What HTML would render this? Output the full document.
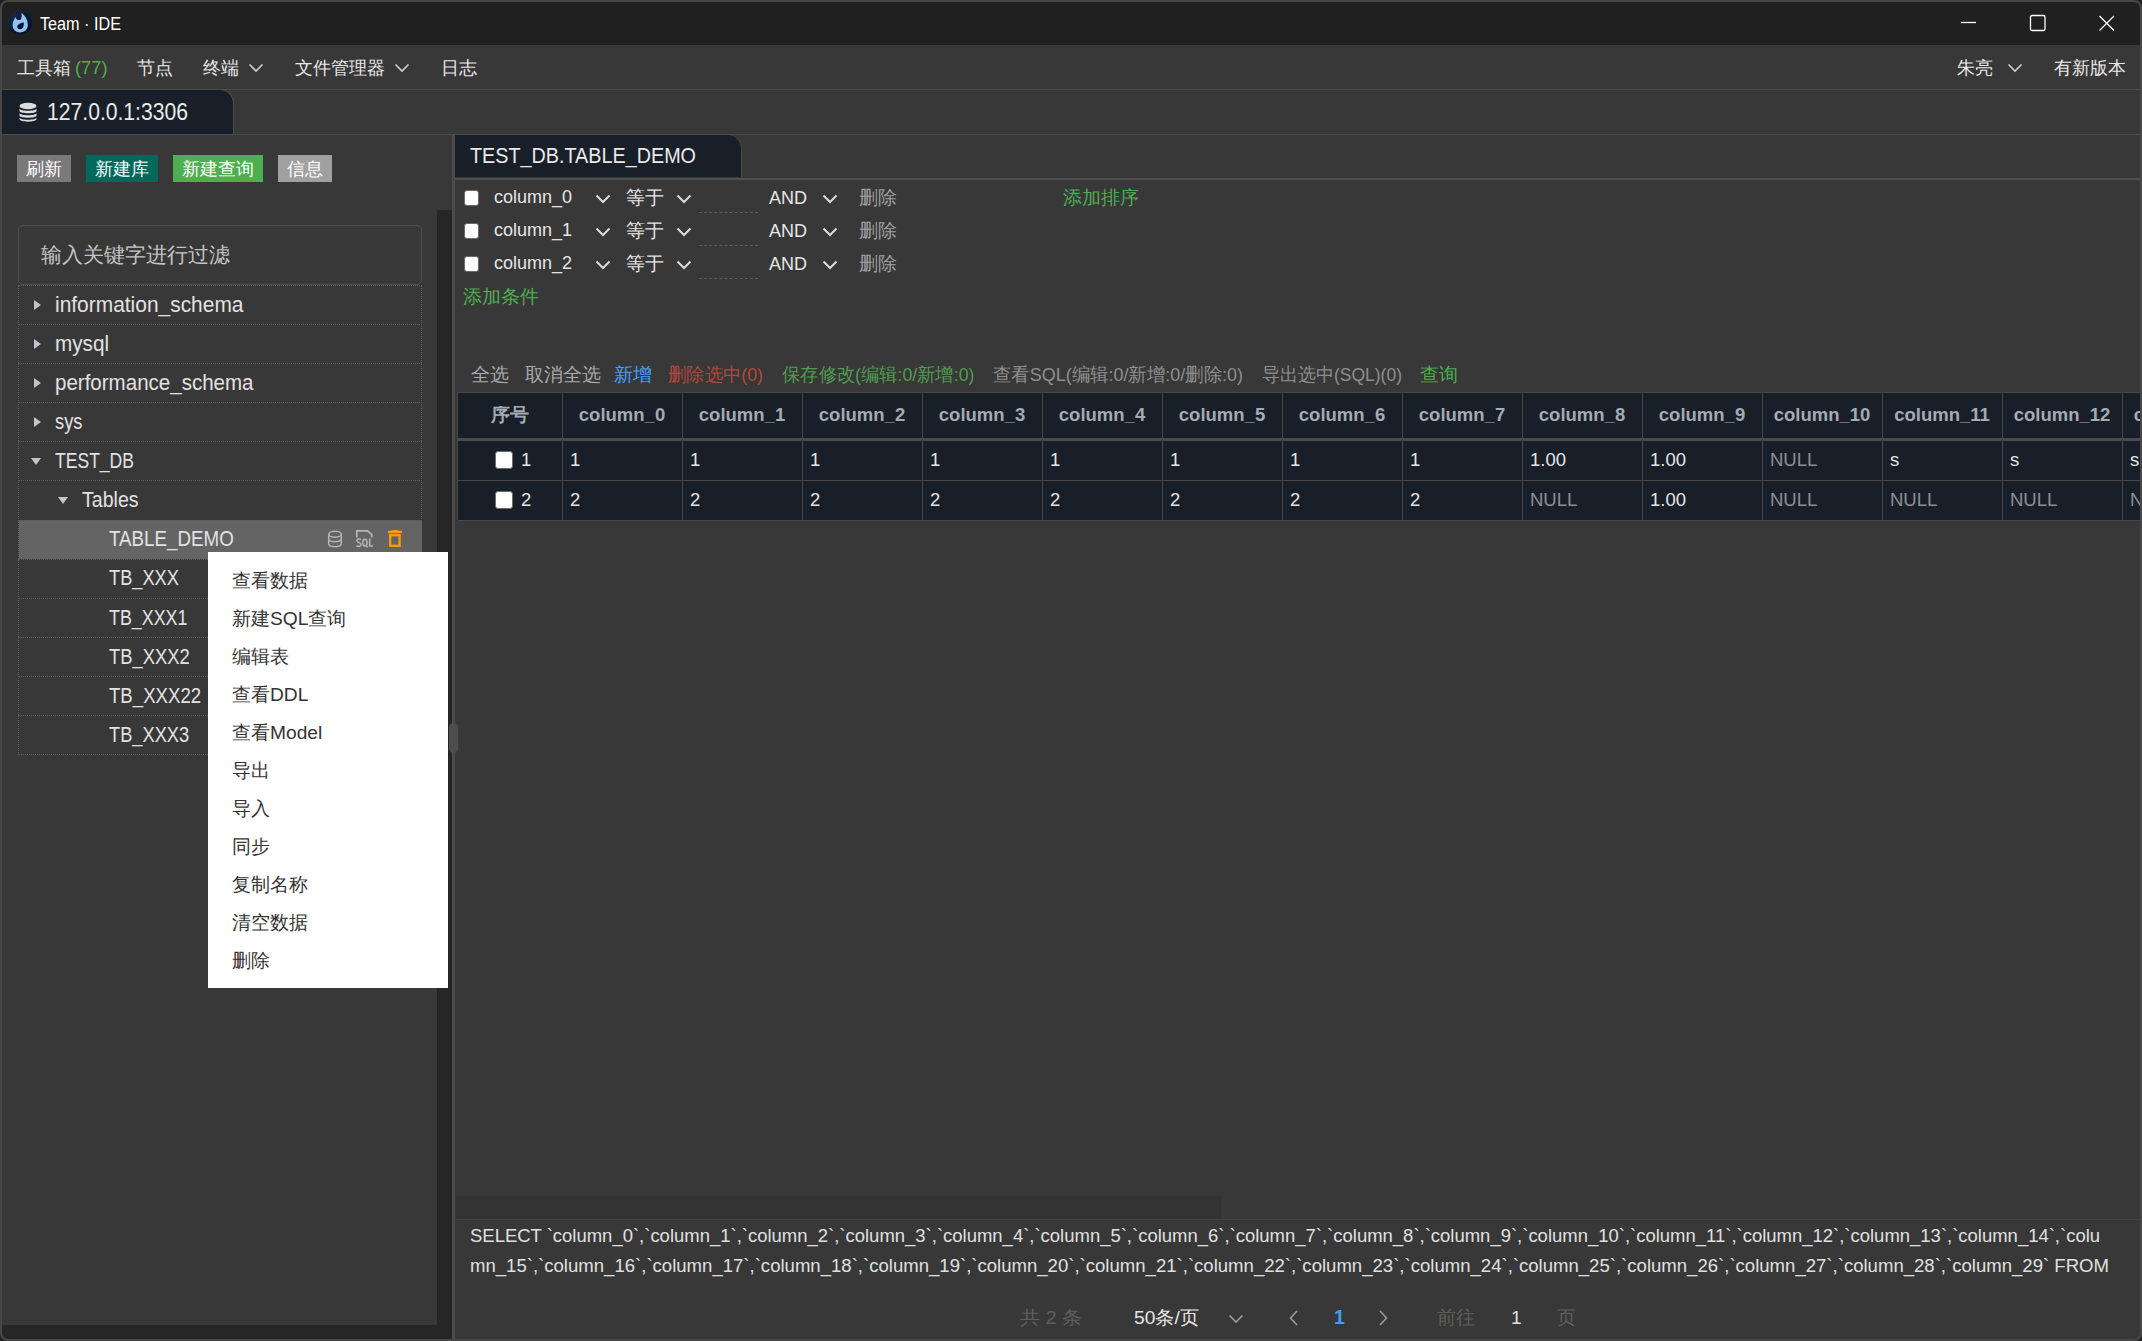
<!DOCTYPE html>
<html><head><meta charset="utf-8">
<style>
*{box-sizing:border-box;margin:0;padding:0}
html,body{width:2142px;height:1341px;overflow:hidden;background:#222222;font-family:"Liberation Sans",sans-serif;color:#e6e6e6}
.a{position:absolute}
.t{position:absolute;white-space:nowrap;line-height:1}
</style></head><body>
<div class="a" style="left:0;top:0;width:2142px;height:1341px;background:#383838;border-radius:8px"></div>
<div class="a" style="left:0;top:0;width:2142px;height:45px;background:#202020"></div>
<svg class="a" style="left:0;top:0" width="45" height="45" viewBox="0 0 45 45">
<defs><linearGradient id="g1" x1="0" y1="0" x2="1" y2="1"><stop offset="0" stop-color="#1a2b48"/><stop offset="1" stop-color="#000c26"/></linearGradient></defs>
<circle cx="20" cy="22.9" r="11.9" fill="url(#g1)"/>
<path d="M20 32.4 C15.6 32.4 12.6 29.2 12.6 25.3 C12.6 21.6 14.3 19.2 15.4 16.9 C16 19 17.4 20.2 19.2 20.1 C21.2 20 22.2 17.6 21.4 12.7 C25.2 15.6 27.8 20 27.8 25 C27.8 29.4 24.5 32.4 20 32.4 Z" fill="#8fc6ef"/>
<path d="M23.7 22.2 C22.3 22.6 17.6 23.6 17.2 26.6 C17 28.3 18.5 29.3 20.3 29.2 C22.6 29 24.2 26.8 23.7 22.2 Z" fill="#001230"/>
</svg>
<div class="t" style="left:40px;top:15px;font-size:18.2px;color:#ffffff;transform:scaleX(0.8904);transform-origin:0 0;">Team · IDE</div>
<svg class="a" style="left:1955px;top:10px" width="180" height="26">
 <line x1="6" y1="12.5" x2="21" y2="12.5" stroke="#fff" stroke-width="1.3"/>
 <rect x="75.5" y="5.5" width="14.5" height="15" rx="1.5" fill="none" stroke="#fff" stroke-width="1.3"/>
 <path d="M144.5 6 L159 20.5 M159 6 L144.5 20.5" stroke="#fff" stroke-width="1.3"/>
</svg>
<div class="a" style="left:0;top:45px;width:2142px;height:44px;background:#383838"></div>
<div class="a" style="left:0;top:89px;width:2142px;height:1px;background:#4b4b4b"></div>
<div class="t" style="left:17px;top:59px;font-size:18px;color:#e8e8e8;">工具箱</div>
<div class="t" style="left:74.5px;top:58.5px;font-size:18.5px;color:#4caf50;transform:scaleX(0.9877);transform-origin:0 0;">(77)</div>
<div class="t" style="left:137px;top:59px;font-size:18px;color:#e8e8e8;">节点</div>
<div class="t" style="left:203px;top:59px;font-size:18px;color:#e8e8e8;">终端</div>
<svg class="a" style="left:248px;top:63px" width="16" height="10"><path d="M1.5 1.5 L8 8 L14.5 1.5" fill="none" stroke="#cfcfcf" stroke-width="1.6"/></svg>
<div class="t" style="left:295px;top:59px;font-size:18px;color:#e8e8e8;">文件管理器</div>
<svg class="a" style="left:394px;top:63px" width="16" height="10"><path d="M1.5 1.5 L8 8 L14.5 1.5" fill="none" stroke="#cfcfcf" stroke-width="1.6"/></svg>
<div class="t" style="left:441px;top:59px;font-size:18px;color:#e8e8e8;">日志</div>
<div class="t" style="left:1957px;top:59px;font-size:18px;color:#e8e8e8;">朱亮</div>
<svg class="a" style="left:2007px;top:63px" width="16" height="10"><path d="M1.5 1.5 L8 8 L14.5 1.5" fill="none" stroke="#cfcfcf" stroke-width="1.6"/></svg>
<div class="t" style="left:2054px;top:59px;font-size:18px;color:#e8e8e8;">有新版本</div>
<div class="a" style="left:2px;top:90px;width:232px;height:44px;background:#191f28;border-right:1px solid #4b4b4b;border-top-right-radius:14px;box-shadow:0 -1px 0 #4b4b4b"></div>
<svg class="a" style="left:18px;top:102px" width="20" height="21" viewBox="0 0 20 21">
 <ellipse cx="10" cy="4" rx="8.5" ry="3.3" fill="#dcdcdc"/>
 <path d="M1.5 6.5 C1.5 9.5 18.5 9.5 18.5 6.5 L18.5 9 C18.5 12 1.5 12 1.5 9 Z" fill="#dcdcdc"/>
 <path d="M1.5 11 C1.5 14 18.5 14 18.5 11 L18.5 13.5 C18.5 16.5 1.5 16.5 1.5 13.5 Z" fill="#dcdcdc"/>
 <path d="M1.5 15.5 C1.5 18.5 18.5 18.5 18.5 15.5 L18.5 17 C18.5 20.5 1.5 20.5 1.5 17 Z" fill="#dcdcdc"/>
</svg>
<div class="t" style="left:47px;top:100.5px;font-size:23px;color:#eaeaea;transform:scaleX(0.9187);transform-origin:0 0;">127.0.0.1:3306</div>
<div class="a" style="left:0;top:134px;width:2142px;height:1px;background:#4b4b4b"></div>
<div class="a" style="left:17px;top:155px;width:54px;height:27px;background:#7a7a7a"></div>
<div class="a" style="left:86px;top:155px;width:72px;height:27px;background:#00695c"></div>
<div class="a" style="left:173px;top:155px;width:90px;height:27px;background:#4caf50"></div>
<div class="a" style="left:278px;top:155px;width:54px;height:27px;background:#a0a0a0"></div>
<div class="t" style="left:26px;top:160px;font-size:18px;color:#fff;">刷新</div>
<div class="t" style="left:95px;top:160px;font-size:18px;color:#fff;">新建库</div>
<div class="t" style="left:182px;top:160px;font-size:18px;color:#fff;">新建查询</div>
<div class="t" style="left:287px;top:160px;font-size:18px;color:#fff;">信息</div>
<div class="a" style="left:18px;top:225px;width:404px;height:60px;border:1px solid #4e4e4e;border-radius:5px"></div>
<div class="t" style="left:41px;top:244px;font-size:21px;color:#c4c4c4;">输入关键字进行过滤</div>
<div class="a" style="left:18px;top:285px;width:404px;height:470px;border-left:1px dotted #5c5c5c;border-right:1px dotted #5c5c5c"></div>
<div class="a" style="left:18px;top:285px;width:404px;height:0;border-top:1px dotted #5c5c5c"></div>
<div class="a" style="left:34px;top:300px;width:0;height:0;border-top:5.5px solid transparent;border-bottom:5.5px solid transparent;border-left:7.5px solid #c0c4cc"></div>
<div class="t" style="left:55px;top:294.7px;font-size:21.5px;color:#e2e2e2;transform:scaleX(0.9736);transform-origin:0 0;">information_schema</div>
<div class="a" style="left:18px;top:324px;width:404px;height:0;border-top:1px dotted #5c5c5c"></div>
<div class="a" style="left:34px;top:339px;width:0;height:0;border-top:5.5px solid transparent;border-bottom:5.5px solid transparent;border-left:7.5px solid #c0c4cc"></div>
<div class="t" style="left:55px;top:333.8px;font-size:21.5px;color:#e2e2e2;transform:scaleX(0.9616);transform-origin:0 0;">mysql</div>
<div class="a" style="left:18px;top:363px;width:404px;height:0;border-top:1px dotted #5c5c5c"></div>
<div class="a" style="left:34px;top:378px;width:0;height:0;border-top:5.5px solid transparent;border-bottom:5.5px solid transparent;border-left:7.5px solid #c0c4cc"></div>
<div class="t" style="left:55px;top:372.9px;font-size:21.5px;color:#e2e2e2;transform:scaleX(0.9546);transform-origin:0 0;">performance_schema</div>
<div class="a" style="left:18px;top:402px;width:404px;height:0;border-top:1px dotted #5c5c5c"></div>
<div class="a" style="left:34px;top:417px;width:0;height:0;border-top:5.5px solid transparent;border-bottom:5.5px solid transparent;border-left:7.5px solid #c0c4cc"></div>
<div class="t" style="left:55px;top:412.0px;font-size:21.5px;color:#e2e2e2;transform:scaleX(0.8496);transform-origin:0 0;">sys</div>
<div class="a" style="left:18px;top:441px;width:404px;height:0;border-top:1px dotted #5c5c5c"></div>
<div class="a" style="left:31px;top:458px;width:0;height:0;border-left:5.5px solid transparent;border-right:5.5px solid transparent;border-top:7.5px solid #c0c4cc"></div>
<div class="t" style="left:55px;top:451.1px;font-size:21.5px;color:#e2e2e2;transform:scaleX(0.8163);transform-origin:0 0;">TEST_DB</div>
<div class="a" style="left:18px;top:480px;width:404px;height:0;border-top:1px dotted #5c5c5c"></div>
<div class="a" style="left:58px;top:497px;width:0;height:0;border-left:5.5px solid transparent;border-right:5.5px solid transparent;border-top:7.5px solid #c0c4cc"></div>
<div class="t" style="left:82px;top:490.2px;font-size:21.5px;color:#e2e2e2;transform:scaleX(0.9106);transform-origin:0 0;">Tables</div>
<div class="a" style="left:19px;top:520px;width:403px;height:39px;background:#646464"></div>
<div class="a" style="left:18px;top:520px;width:404px;height:0;border-top:1px dotted #5c5c5c"></div>
<div class="t" style="left:109px;top:529.3px;font-size:21.5px;color:#e2e2e2;transform:scaleX(0.8728);transform-origin:0 0;">TABLE_DEMO</div>
<div class="a" style="left:18px;top:559px;width:404px;height:0;border-top:1px dotted #5c5c5c"></div>
<div class="t" style="left:109px;top:568.4px;font-size:21.5px;color:#e2e2e2;transform:scaleX(0.8478);transform-origin:0 0;">TB_XXX</div>
<div class="a" style="left:18px;top:598px;width:404px;height:0;border-top:1px dotted #5c5c5c"></div>
<div class="t" style="left:109px;top:607.5px;font-size:21.5px;color:#e2e2e2;transform:scaleX(0.8303);transform-origin:0 0;">TB_XXX1</div>
<div class="a" style="left:18px;top:637px;width:404px;height:0;border-top:1px dotted #5c5c5c"></div>
<div class="t" style="left:109px;top:646.6px;font-size:21.5px;color:#e2e2e2;transform:scaleX(0.8557);transform-origin:0 0;">TB_XXX2</div>
<div class="a" style="left:18px;top:676px;width:404px;height:0;border-top:1px dotted #5c5c5c"></div>
<div class="t" style="left:109px;top:685.7px;font-size:21.5px;color:#e2e2e2;transform:scaleX(0.8658);transform-origin:0 0;">TB_XXX22</div>
<div class="a" style="left:18px;top:715px;width:404px;height:0;border-top:1px dotted #5c5c5c"></div>
<div class="t" style="left:109px;top:724.8px;font-size:21.5px;color:#e2e2e2;transform:scaleX(0.8494);transform-origin:0 0;">TB_XXX3</div>
<div class="a" style="left:18px;top:754px;width:404px;height:0;border-top:1px dotted #5c5c5c"></div>
<svg class="a" style="left:326px;top:529px" width="18" height="20" viewBox="0 0 18 20">
<ellipse cx="9" cy="5.3" rx="6.3" ry="3" fill="none" stroke="#b4b4b4" stroke-width="1.5"/>
<path d="M2.7 5.3 V14.8 C2.7 18.8 15.3 18.8 15.3 14.8 V5.3 M2.7 9.8 C2.7 13.8 15.3 13.8 15.3 9.8" fill="none" stroke="#b4b4b4" stroke-width="1.5"/></svg>
<svg class="a" style="left:355px;top:529px" width="19" height="20" viewBox="0 0 19 20">
<path d="M1.8 8.5 V1.8 H12.6 L16.8 5.6 V8.5" fill="none" stroke="#b4b4b4" stroke-width="1.7"/>
<path d="M5.9 10.7 C5.2 9.7 1.9 9.5 1.9 11.8 C1.9 13.8 5.9 13.2 5.9 15.5 C5.9 17.9 2.4 17.7 1.5 16.5" fill="none" stroke="#b4b4b4" stroke-width="1.6"/>
<ellipse cx="9.9" cy="13.6" rx="2.1" ry="3.4" fill="none" stroke="#b4b4b4" stroke-width="1.6"/><path d="M10.6 16.2 L12.6 18.2 M14.7 9.6 V17 H18" fill="none" stroke="#b4b4b4" stroke-width="1.6"/></svg>
<svg class="a" style="left:386px;top:529px" width="18" height="20" viewBox="0 0 18 20">
<rect x="2" y="1.8" width="14" height="2.5" rx="0.6" fill="#ff9a00"/><path d="M5.8 2 C6.3 0.6 11.7 0.6 12.2 2 Z" fill="#ff9a00"/>
<rect x="4.2" y="6.2" width="9.4" height="10.6" fill="none" stroke="#ff9a00" stroke-width="2.3"/></svg>
<div class="a" style="left:437px;top:210px;width:15px;height:1131px;background:#262626"></div>
<div class="a" style="left:2px;top:1325px;width:450px;height:16px;background:#262626"></div>
<div class="a" style="left:452px;top:135px;width:3px;height:1206px;background:#4b4b4b"></div>
<div class="a" style="left:449px;top:723px;width:9px;height:30px;background:#4d4d4d;border-radius:4.5px"></div>
<div class="a" style="left:455px;top:135px;width:287px;height:42px;background:#191f28;border-right:1px solid #4b4b4b;border-top-right-radius:14px"></div>
<div class="t" style="left:470px;top:145px;font-size:22.6px;color:#eaeaea;transform:scaleX(0.8752);transform-origin:0 0;">TEST_DB.TABLE_DEMO</div>
<div class="a" style="left:455px;top:178px;width:1685px;height:2px;background:#4e4e4e"></div>
<div class="a" style="left:464px;top:190px;width:15px;height:16px;background:#fff;border:1.2px solid #6a6a6a;border-radius:3px"></div>
<div class="t" style="left:494px;top:188.0px;font-size:18px;color:#e6e6e6;">column_0</div>
<svg class="a" style="left:595px;top:193.5px" width="16" height="10"><path d="M1.5 1.5 L8 8 L14.5 1.5" fill="none" stroke="#dcdcdc" stroke-width="2"/></svg>
<div class="t" style="left:626px;top:187.5px;font-size:19px;color:#e6e6e6;">等于</div>
<svg class="a" style="left:676px;top:193.5px" width="16" height="10"><path d="M1.5 1.5 L8 8 L14.5 1.5" fill="none" stroke="#dcdcdc" stroke-width="2"/></svg>
<div class="a" style="left:699px;top:212px;width:59px;height:0;border-top:1px dashed #5a5a5a"></div>
<div class="t" style="left:769px;top:188.7px;font-size:18px;color:#e6e6e6;">AND</div>
<svg class="a" style="left:822px;top:193.5px" width="16" height="10"><path d="M1.5 1.5 L8 8 L14.5 1.5" fill="none" stroke="#dcdcdc" stroke-width="2"/></svg>
<div class="t" style="left:859px;top:187.5px;font-size:19px;color:#a0a0a0;">删除</div>
<div class="a" style="left:464px;top:223px;width:15px;height:16px;background:#fff;border:1.2px solid #6a6a6a;border-radius:3px"></div>
<div class="t" style="left:494px;top:221.0px;font-size:18px;color:#e6e6e6;">column_1</div>
<svg class="a" style="left:595px;top:226.5px" width="16" height="10"><path d="M1.5 1.5 L8 8 L14.5 1.5" fill="none" stroke="#dcdcdc" stroke-width="2"/></svg>
<div class="t" style="left:626px;top:220.5px;font-size:19px;color:#e6e6e6;">等于</div>
<svg class="a" style="left:676px;top:226.5px" width="16" height="10"><path d="M1.5 1.5 L8 8 L14.5 1.5" fill="none" stroke="#dcdcdc" stroke-width="2"/></svg>
<div class="a" style="left:699px;top:245px;width:59px;height:0;border-top:1px dashed #5a5a5a"></div>
<div class="t" style="left:769px;top:221.7px;font-size:18px;color:#e6e6e6;">AND</div>
<svg class="a" style="left:822px;top:226.5px" width="16" height="10"><path d="M1.5 1.5 L8 8 L14.5 1.5" fill="none" stroke="#dcdcdc" stroke-width="2"/></svg>
<div class="t" style="left:859px;top:220.5px;font-size:19px;color:#a0a0a0;">删除</div>
<div class="a" style="left:464px;top:256px;width:15px;height:16px;background:#fff;border:1.2px solid #6a6a6a;border-radius:3px"></div>
<div class="t" style="left:494px;top:254.0px;font-size:18px;color:#e6e6e6;">column_2</div>
<svg class="a" style="left:595px;top:259.5px" width="16" height="10"><path d="M1.5 1.5 L8 8 L14.5 1.5" fill="none" stroke="#dcdcdc" stroke-width="2"/></svg>
<div class="t" style="left:626px;top:253.5px;font-size:19px;color:#e6e6e6;">等于</div>
<svg class="a" style="left:676px;top:259.5px" width="16" height="10"><path d="M1.5 1.5 L8 8 L14.5 1.5" fill="none" stroke="#dcdcdc" stroke-width="2"/></svg>
<div class="a" style="left:699px;top:278px;width:59px;height:0;border-top:1px dashed #5a5a5a"></div>
<div class="t" style="left:769px;top:254.7px;font-size:18px;color:#e6e6e6;">AND</div>
<svg class="a" style="left:822px;top:259.5px" width="16" height="10"><path d="M1.5 1.5 L8 8 L14.5 1.5" fill="none" stroke="#dcdcdc" stroke-width="2"/></svg>
<div class="t" style="left:859px;top:253.5px;font-size:19px;color:#a0a0a0;">删除</div>
<div class="t" style="left:1063px;top:188px;font-size:19px;color:#4caf50;">添加排序</div>
<div class="t" style="left:463px;top:287.5px;font-size:18.5px;color:#4caf50;">添加条件</div>
<div class="t" style="left:471px;top:365.5px;font-size:18.5px;color:#a9a9a9;">全选</div>
<div class="t" style="left:525px;top:365.5px;font-size:18.5px;color:#a9a9a9;">取消全选</div>
<div class="t" style="left:614px;top:365.5px;font-size:18.5px;color:#409eff;">新增</div>
<div class="t" style="left:668px;top:365.5px;font-size:18.5px;color:#b5463b;transform:scaleX(0.9632);transform-origin:0 0;">删除选中(0)</div>
<div class="t" style="left:782px;top:365.5px;font-size:18.5px;color:#4e9c4e;transform:scaleX(0.9609);transform-origin:0 0;">保存修改(编辑:0/新增:0)</div>
<div class="t" style="left:993px;top:365.5px;font-size:18.5px;color:#8e8e8e;transform:scaleX(0.9693);transform-origin:0 0;">查看SQL(编辑:0/新增:0/删除:0)</div>
<div class="t" style="left:1262px;top:365.5px;font-size:18.5px;color:#8e8e8e;transform:scaleX(0.9462);transform-origin:0 0;">导出选中(SQL)(0)</div>
<div class="t" style="left:1420px;top:365.5px;font-size:18.5px;color:#4caf50;">查询</div>
<div class="a" style="left:458px;top:393px;width:1684px;height:127px;background:#191f28"></div>
<div class="a" style="left:458px;top:438px;width:1684px;height:3px;background:#4b4b4b"></div>
<div class="a" style="left:458px;top:480px;width:1684px;height:1px;background:#474747"></div>
<div class="a" style="left:458px;top:392px;width:1684px;height:1px;background:#474747"></div>
<div class="a" style="left:458px;top:520px;width:1684px;height:1px;background:#474747"></div>
<div class="a" style="left:457px;top:393px;width:1px;height:127px;background:#474747"></div>
<div class="a" style="left:562px;top:393px;width:1px;height:127px;background:#474747"></div>
<div class="a" style="left:682px;top:393px;width:1px;height:127px;background:#474747"></div>
<div class="a" style="left:802px;top:393px;width:1px;height:127px;background:#474747"></div>
<div class="a" style="left:922px;top:393px;width:1px;height:127px;background:#474747"></div>
<div class="a" style="left:1042px;top:393px;width:1px;height:127px;background:#474747"></div>
<div class="a" style="left:1162px;top:393px;width:1px;height:127px;background:#474747"></div>
<div class="a" style="left:1282px;top:393px;width:1px;height:127px;background:#474747"></div>
<div class="a" style="left:1402px;top:393px;width:1px;height:127px;background:#474747"></div>
<div class="a" style="left:1522px;top:393px;width:1px;height:127px;background:#474747"></div>
<div class="a" style="left:1642px;top:393px;width:1px;height:127px;background:#474747"></div>
<div class="a" style="left:1762px;top:393px;width:1px;height:127px;background:#474747"></div>
<div class="a" style="left:1882px;top:393px;width:1px;height:127px;background:#474747"></div>
<div class="a" style="left:2002px;top:393px;width:1px;height:127px;background:#474747"></div>
<div class="a" style="left:2122px;top:393px;width:1px;height:127px;background:#474747"></div>
<div class="t" style="left:458px;top:405.5px;width:104px;text-align:center;font-size:18.5px;font-weight:bold;color:#a3abb5;overflow:hidden">序号</div>
<div class="t" style="left:562px;top:405.5px;width:120px;text-align:center;font-size:18.5px;font-weight:bold;color:#a3abb5;overflow:hidden">column_0</div>
<div class="t" style="left:682px;top:405.5px;width:120px;text-align:center;font-size:18.5px;font-weight:bold;color:#a3abb5;overflow:hidden">column_1</div>
<div class="t" style="left:802px;top:405.5px;width:120px;text-align:center;font-size:18.5px;font-weight:bold;color:#a3abb5;overflow:hidden">column_2</div>
<div class="t" style="left:922px;top:405.5px;width:120px;text-align:center;font-size:18.5px;font-weight:bold;color:#a3abb5;overflow:hidden">column_3</div>
<div class="t" style="left:1042px;top:405.5px;width:120px;text-align:center;font-size:18.5px;font-weight:bold;color:#a3abb5;overflow:hidden">column_4</div>
<div class="t" style="left:1162px;top:405.5px;width:120px;text-align:center;font-size:18.5px;font-weight:bold;color:#a3abb5;overflow:hidden">column_5</div>
<div class="t" style="left:1282px;top:405.5px;width:120px;text-align:center;font-size:18.5px;font-weight:bold;color:#a3abb5;overflow:hidden">column_6</div>
<div class="t" style="left:1402px;top:405.5px;width:120px;text-align:center;font-size:18.5px;font-weight:bold;color:#a3abb5;overflow:hidden">column_7</div>
<div class="t" style="left:1522px;top:405.5px;width:120px;text-align:center;font-size:18.5px;font-weight:bold;color:#a3abb5;overflow:hidden">column_8</div>
<div class="t" style="left:1642px;top:405.5px;width:120px;text-align:center;font-size:18.5px;font-weight:bold;color:#a3abb5;overflow:hidden">column_9</div>
<div class="t" style="left:1762px;top:405.5px;width:120px;text-align:center;font-size:18.5px;font-weight:bold;color:#a3abb5;overflow:hidden">column_10</div>
<div class="t" style="left:1882px;top:405.5px;width:120px;text-align:center;font-size:18.5px;font-weight:bold;color:#a3abb5;overflow:hidden">column_11</div>
<div class="t" style="left:2002px;top:405.5px;width:120px;text-align:center;font-size:18.5px;font-weight:bold;color:#a3abb5;overflow:hidden">column_12</div>
<div class="t" style="left:2122px;top:405.5px;width:120px;text-align:center;font-size:18.5px;font-weight:bold;color:#a3abb5;overflow:hidden">column_13</div>
<div class="a" style="left:495px;top:451px;width:18px;height:18px;background:#fff;border:1.4px solid #6a6a6a;border-radius:3px"></div>
<div class="t" style="left:521px;top:451px;font-size:18.5px;color:#e6e6e6;">1</div>
<div class="t" style="left:570px;top:451px;font-size:18.5px;color:#e6e6e6;">1</div>
<div class="t" style="left:690px;top:451px;font-size:18.5px;color:#e6e6e6;">1</div>
<div class="t" style="left:810px;top:451px;font-size:18.5px;color:#e6e6e6;">1</div>
<div class="t" style="left:930px;top:451px;font-size:18.5px;color:#e6e6e6;">1</div>
<div class="t" style="left:1050px;top:451px;font-size:18.5px;color:#e6e6e6;">1</div>
<div class="t" style="left:1170px;top:451px;font-size:18.5px;color:#e6e6e6;">1</div>
<div class="t" style="left:1290px;top:451px;font-size:18.5px;color:#e6e6e6;">1</div>
<div class="t" style="left:1410px;top:451px;font-size:18.5px;color:#e6e6e6;">1</div>
<div class="t" style="left:1530px;top:451px;font-size:18.5px;color:#e6e6e6;">1.00</div>
<div class="t" style="left:1650px;top:451px;font-size:18.5px;color:#e6e6e6;">1.00</div>
<div class="t" style="left:1770px;top:451px;font-size:18.5px;color:#8a8f96;">NULL</div>
<div class="t" style="left:1890px;top:451px;font-size:18.5px;color:#e6e6e6;">s</div>
<div class="t" style="left:2010px;top:451px;font-size:18.5px;color:#e6e6e6;">s</div>
<div class="t" style="left:2130px;top:451px;font-size:18.5px;color:#e6e6e6;">s</div>
<div class="a" style="left:495px;top:491px;width:18px;height:18px;background:#fff;border:1.4px solid #6a6a6a;border-radius:3px"></div>
<div class="t" style="left:521px;top:491px;font-size:18.5px;color:#e6e6e6;">2</div>
<div class="t" style="left:570px;top:491px;font-size:18.5px;color:#e6e6e6;">2</div>
<div class="t" style="left:690px;top:491px;font-size:18.5px;color:#e6e6e6;">2</div>
<div class="t" style="left:810px;top:491px;font-size:18.5px;color:#e6e6e6;">2</div>
<div class="t" style="left:930px;top:491px;font-size:18.5px;color:#e6e6e6;">2</div>
<div class="t" style="left:1050px;top:491px;font-size:18.5px;color:#e6e6e6;">2</div>
<div class="t" style="left:1170px;top:491px;font-size:18.5px;color:#e6e6e6;">2</div>
<div class="t" style="left:1290px;top:491px;font-size:18.5px;color:#e6e6e6;">2</div>
<div class="t" style="left:1410px;top:491px;font-size:18.5px;color:#e6e6e6;">2</div>
<div class="t" style="left:1530px;top:491px;font-size:18.5px;color:#8a8f96;">NULL</div>
<div class="t" style="left:1650px;top:491px;font-size:18.5px;color:#e6e6e6;">1.00</div>
<div class="t" style="left:1770px;top:491px;font-size:18.5px;color:#8a8f96;">NULL</div>
<div class="t" style="left:1890px;top:491px;font-size:18.5px;color:#8a8f96;">NULL</div>
<div class="t" style="left:2010px;top:491px;font-size:18.5px;color:#8a8f96;">NULL</div>
<div class="t" style="left:2130px;top:491px;font-size:18.5px;color:#8a8f96;">N</div>
<div class="a" style="left:456px;top:1196px;width:765px;height:23px;background:#333333"></div>
<div class="a" style="left:455px;top:1219px;width:1685px;height:1px;background:#424242"></div>
<div class="t" style="left:470px;top:1227px;font-size:18.8px;color:#e0e0e0;transform:scaleX(0.9838);transform-origin:0 0;">SELECT `column_0`,`column_1`,`column_2`,`column_3`,`column_4`,`column_5`,`column_6`,`column_7`,`column_8`,`column_9`,`column_10`,`column_11`,`column_12`,`column_13`,`column_14`,`colu</div>
<div class="t" style="left:470px;top:1257px;font-size:18.8px;color:#e0e0e0;transform:scaleX(0.9881);transform-origin:0 0;">mn_15`,`column_16`,`column_17`,`column_18`,`column_19`,`column_20`,`column_21`,`column_22`,`column_23`,`column_24`,`column_25`,`column_26`,`column_27`,`column_28`,`column_29` FROM</div>
<div class="t" style="left:1020px;top:1307.5px;font-size:19px;color:#5e5e5e;transform:scaleX(1.0486);transform-origin:0 0;">共 2 条</div>
<div class="t" style="left:1134px;top:1307.5px;font-size:19px;color:#e6e6e6;transform:scaleX(1.0090);transform-origin:0 0;">50条/页</div>
<svg class="a" style="left:1228px;top:1314px" width="16" height="10"><path d="M1.5 1.5 L8 8 L14.5 1.5" fill="none" stroke="#9a9a9a" stroke-width="1.6"/></svg>
<svg class="a" style="left:1288px;top:1309px" width="12" height="18"><path d="M9 2 L2.5 9 L9 16" fill="none" stroke="#9a9a9a" stroke-width="1.6"/></svg>
<div class="t" style="left:1334px;top:1307.5px;font-size:19.5px;color:#409eff;font-weight:bold;">1</div>
<svg class="a" style="left:1377px;top:1309px" width="12" height="18"><path d="M3 2 L9.5 9 L3 16" fill="none" stroke="#9a9a9a" stroke-width="1.6"/></svg>
<div class="t" style="left:1437px;top:1307.5px;font-size:19px;color:#5e5e5e;">前往</div>
<div class="t" style="left:1511px;top:1307.5px;font-size:19px;color:#e0e0e0;">1</div>
<div class="t" style="left:1557px;top:1307.5px;font-size:19px;color:#5e5e5e;">页</div>
<div class="a" style="left:208px;top:552px;width:240px;height:436px;background:#ffffff"></div>
<div class="t" style="left:232px;top:570.5px;font-size:19.2px;color:#333333;">查看数据</div>
<div class="t" style="left:232px;top:608.5px;font-size:19.2px;color:#333333;">新建SQL查询</div>
<div class="t" style="left:232px;top:646.6px;font-size:19.2px;color:#333333;">编辑表</div>
<div class="t" style="left:232px;top:684.6px;font-size:19.2px;color:#333333;">查看DDL</div>
<div class="t" style="left:232px;top:722.7px;font-size:19.2px;color:#333333;">查看Model</div>
<div class="t" style="left:232px;top:760.8px;font-size:19.2px;color:#333333;">导出</div>
<div class="t" style="left:232px;top:798.8px;font-size:19.2px;color:#333333;">导入</div>
<div class="t" style="left:232px;top:836.8px;font-size:19.2px;color:#333333;">同步</div>
<div class="t" style="left:232px;top:874.9px;font-size:19.2px;color:#333333;">复制名称</div>
<div class="t" style="left:232px;top:913.0px;font-size:19.2px;color:#333333;">清空数据</div>
<div class="t" style="left:232px;top:951.0px;font-size:19.2px;color:#333333;">删除</div>
<div class="a" style="left:0;top:0;width:2142px;height:1341px;border:2px solid #474747;border-radius:8px;pointer-events:none"></div>
</body></html>
